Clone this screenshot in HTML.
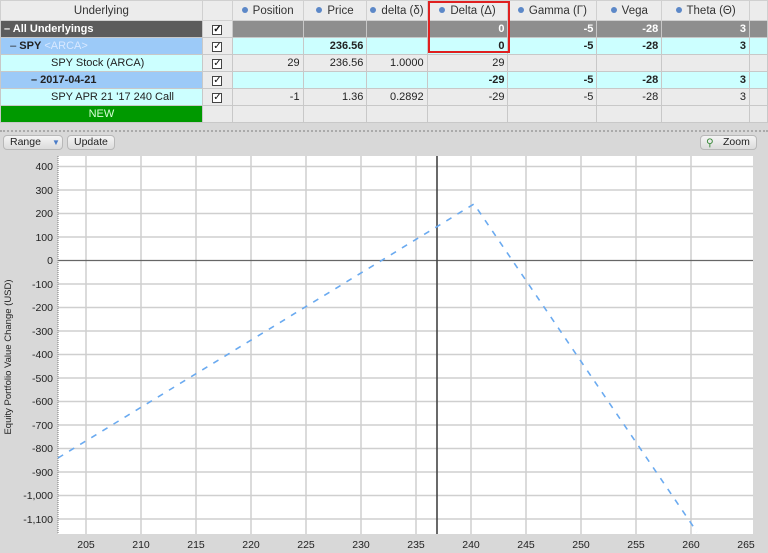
<!DOCTYPE html>
<html><head><style>
*{margin:0;padding:0;box-sizing:border-box}
body{width:768px;height:553px;overflow:hidden;background:#d8d8d8;font-family:"Liberation Sans",sans-serif;font-size:11px;color:#222;position:relative}
table{border-collapse:collapse;position:absolute;left:0;top:0;table-layout:fixed}
td{height:17px;border:1px solid #c8c8c8;padding:0 3px;text-align:right;white-space:nowrap;overflow:hidden}
tr.h td{height:20px;background:#ececec;text-align:center;font-size:11.5px;color:#333;border-color:#d0d0d0}
.dot{display:inline-block;width:6px;height:6px;border-radius:50%;background:#5c88c8;margin-right:5px;vertical-align:1px}
tr.all td{background:#8e8e8e;color:#fff;font-weight:bold}
tr.all td:first-child{background:#5c5c5c;text-align:left}
tr.cy td{background:#ccffff}
tr.bl td:first-child{background:#9ccaf8}
tr.g td{background:#ebebeb}
td.l{text-align:left}
.cb{display:inline-block;width:10px;height:10px;border:1px solid #444;background:#fff;font-size:10px;line-height:8px;text-align:center;color:#111}
td.c{text-align:center;background:#ebebeb!important}
b{font-weight:bold}
.btn{position:absolute;top:135px;height:15px;border:1px solid #b8b8b8;border-radius:4px;background:linear-gradient(#f4f4f4,#dcdcdc);font-size:10.5px;line-height:13px;padding:0 6px;color:#222;white-space:nowrap}
</style></head><body>
<table>
<colgroup><col style="width:202px"><col style="width:30px"><col style="width:71px"><col style="width:64px"><col style="width:60px"><col style="width:81px"><col style="width:89px"><col style="width:65px"><col style="width:88px"><col style="width:18px"></colgroup>
<tr class="h"><td>Underlying</td><td></td><td><span class="dot"></span>Position</td><td><span class="dot"></span>Price</td><td><span class="dot"></span>delta (δ)</td><td><span class="dot"></span>Delta (Δ)</td><td><span class="dot"></span>Gamma (Γ)</td><td><span class="dot"></span>Vega</td><td><span class="dot"></span>Theta (Θ)</td><td></td></tr>
<tr class="all"><td>– All Underlyings</td><td class="c"><span class="cb">✓</span></td><td></td><td></td><td></td><td>0</td><td>-5</td><td>-28</td><td>3</td><td></td></tr>
<tr class="cy bl"><td class="l">&nbsp;&nbsp;– <b>SPY</b> <span style="color:#d8e8ff">&lt;ARCA&gt;</span></td><td class="c"><span class="cb">✓</span></td><td></td><td><b>236.56</b></td><td></td><td><b>0</b></td><td><b>-5</b></td><td><b>-28</b></td><td><b>3</b></td><td></td></tr>
<tr class="cy"><td class="l" style="padding-left:50px">SPY Stock (ARCA)</td><td class="c"><span class="cb">✓</span></td><td style="background:#ebebeb">29</td><td style="background:#ebebeb">236.56</td><td style="background:#ebebeb">1.0000</td><td style="background:#ebebeb">29</td><td style="background:#ebebeb"></td><td style="background:#ebebeb"></td><td style="background:#ebebeb"></td><td style="background:#ebebeb"></td></tr>
<tr class="cy bl"><td class="l" style="padding-left:30px"><b>– 2017-04-21</b></td><td class="c"><span class="cb">✓</span></td><td></td><td></td><td></td><td><b>-29</b></td><td><b>-5</b></td><td><b>-28</b></td><td><b>3</b></td><td></td></tr>
<tr class="cy"><td class="l" style="padding-left:50px">SPY APR 21 '17 240 Call</td><td class="c"><span class="cb">✓</span></td><td style="background:#ebebeb">-1</td><td style="background:#ebebeb">1.36</td><td style="background:#ebebeb">0.2892</td><td style="background:#ebebeb">-29</td><td style="background:#ebebeb">-5</td><td style="background:#ebebeb">-28</td><td style="background:#ebebeb">3</td><td style="background:#ebebeb"></td></tr>
<tr class="g"><td style="background:#009900;color:#d8ffd8;text-align:center">NEW</td><td></td><td></td><td></td><td></td><td></td><td></td><td></td><td></td><td></td></tr>
</table>
<div style="position:absolute;left:428px;top:1px;width:82px;height:52px;border:2px solid #e02020"></div>
<div style="position:absolute;left:0;top:130px;width:768px;border-top:2px dotted #aaa"></div>
<div class="btn" style="left:3px;width:60px">Range<span style="position:absolute;left:48px;top:0;color:#4a7cc8;font-size:8px">▼</span></div>
<div class="btn" style="left:67px">Update</div>
<div class="btn" style="left:700px;top:135px;padding-left:22px"><span style="position:absolute;left:5px;top:1px;color:#3a8a3a">⚲</span>Zoom</div>
<svg style="position:absolute;left:0;top:150px" width="768" height="403">
<g font-family="Liberation Sans" font-size="10.5" fill="#222">
<rect x="58" y="6" width="695" height="378" fill="#fff"/>
<g stroke="#cfcfcf" stroke-width="1.5">
<line x1="86" y1="6" x2="86" y2="384"/><line x1="141" y1="6" x2="141" y2="384"/><line x1="196" y1="6" x2="196" y2="384"/><line x1="251" y1="6" x2="251" y2="384"/><line x1="306" y1="6" x2="306" y2="384"/><line x1="361" y1="6" x2="361" y2="384"/><line x1="416" y1="6" x2="416" y2="384"/><line x1="471" y1="6" x2="471" y2="384"/><line x1="526" y1="6" x2="526" y2="384"/><line x1="581" y1="6" x2="581" y2="384"/><line x1="636" y1="6" x2="636" y2="384"/><line x1="691" y1="6" x2="691" y2="384"/>
<line x1="58" y1="16.5" x2="753" y2="16.5"/><line x1="58" y1="40" x2="753" y2="40"/><line x1="58" y1="63.5" x2="753" y2="63.5"/><line x1="58" y1="87" x2="753" y2="87"/>
<line x1="58" y1="134" x2="753" y2="134"/><line x1="58" y1="157.5" x2="753" y2="157.5"/><line x1="58" y1="181" x2="753" y2="181"/><line x1="58" y1="204.5" x2="753" y2="204.5"/><line x1="58" y1="228" x2="753" y2="228"/><line x1="58" y1="251.5" x2="753" y2="251.5"/><line x1="58" y1="275" x2="753" y2="275"/><line x1="58" y1="298.5" x2="753" y2="298.5"/><line x1="58" y1="322" x2="753" y2="322"/><line x1="58" y1="345.5" x2="753" y2="345.5"/><line x1="58" y1="369" x2="753" y2="369"/>
</g>
<line x1="58" y1="110.5" x2="753" y2="110.5" stroke="#666" stroke-width="1.2"/>
<line x1="437" y1="6" x2="437" y2="384" stroke="#444" stroke-width="1.6"/>
<line x1="58" y1="6" x2="58" y2="384" stroke="#777" stroke-dasharray="1 1"/>
<polyline points="58,308 474,54 697,382" fill="none" stroke="#6aaaf0" stroke-width="1.6" stroke-dasharray="6 7"/>
<g text-anchor="end">
<text x="53" y="20">400</text><text x="53" y="44">300</text><text x="53" y="67">200</text><text x="53" y="91">100</text><text x="53" y="114">0</text><text x="53" y="138">-100</text><text x="53" y="161">-200</text><text x="53" y="185">-300</text><text x="53" y="208">-400</text><text x="53" y="232">-500</text><text x="53" y="255">-600</text><text x="53" y="279">-700</text><text x="53" y="302">-800</text><text x="53" y="326">-900</text><text x="53" y="349">-1,000</text><text x="53" y="373">-1,100</text>
</g>
<g text-anchor="middle">
<text x="86" y="398">205</text><text x="141" y="398">210</text><text x="196" y="398">215</text><text x="251" y="398">220</text><text x="306" y="398">225</text><text x="361" y="398">230</text><text x="416" y="398">235</text><text x="471" y="398">240</text><text x="526" y="398">245</text><text x="581" y="398">250</text><text x="636" y="398">255</text><text x="691" y="398">260</text><text x="746" y="398">265</text>
</g>
<text transform="translate(11,207) rotate(-90)" text-anchor="middle" font-size="9.5">Equity Portfolio Value Change (USD)</text>
</g>
</svg>
</body></html>
